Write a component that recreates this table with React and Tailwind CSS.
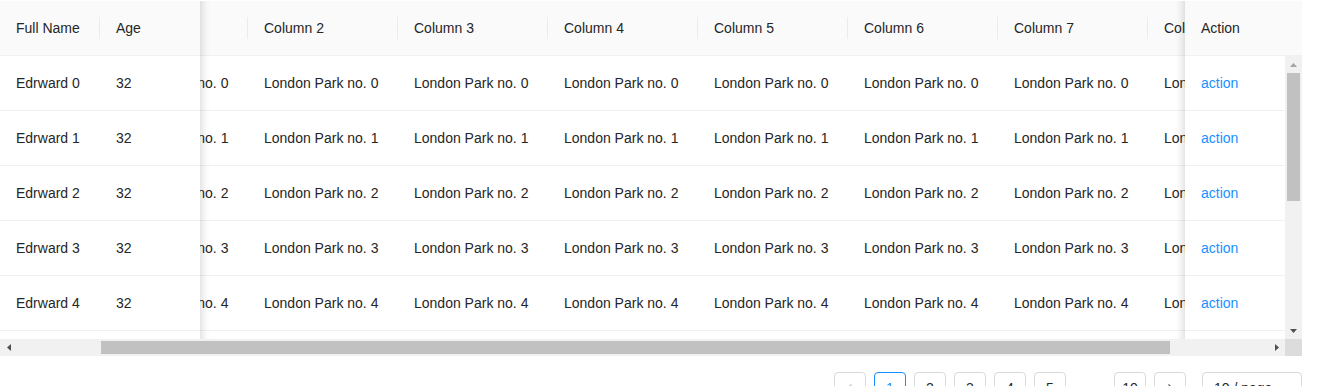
import React from "react";

const rows = [0, 1, 2, 3, 4];
const cols = [1, 2, 3, 4, 5, 6, 7, 8];

function Sep() {
  return <div className="h-[22px] w-px shrink-0 bg-[#ebebeb]" />;
}

function Tri({ dir, color }) {
  const pts = {
    up: "0,4 3.5,0 7,4",
    down: "0,0 7,0 3.5,4",
    left: "4,0 4,7 0,3.5",
    right: "0,0 0,7 4,3.5",
  }[dir];
  const vertical = dir === "up" || dir === "down";
  return (
    <svg width={vertical ? 7 : 4} height={vertical ? 4 : 7} viewBox={vertical ? "0 0 7 4" : "0 0 4 7"}>
      <polygon points={pts} fill={color} />
    </svg>
  );
}

function PageItem({ children, active }) {
  return (
    <div
      className={
        active
          ? "mr-2 flex h-8 w-8 shrink-0 justify-center rounded-sm border border-[#1890ff] bg-white font-medium leading-[30px] text-[#1890ff]"
          : "mr-2 flex h-8 w-8 shrink-0 justify-center rounded-sm border border-[#d9d9d9] bg-white leading-[30px] text-[#262626]"
      }
    >
      {children}
    </div>
  );
}

export default function App() {
  return (
    <div className="h-[386px] w-[1325px] overflow-hidden bg-white font-['Liberation_Sans',Arial,sans-serif] text-sm leading-[22px] text-[#262626]">
      <div className="w-[1302px] pt-px">
        <div className="flex h-[338px]">
          {/* left fixed columns */}
          <div className="relative z-10 w-[200px] shrink-0 bg-white after:pointer-events-none after:absolute after:top-0 after:right-0 after:bottom-0 after:w-[30px] after:translate-x-full after:shadow-[inset_10px_0_8px_-8px_rgba(0,0,0,0.15)]">
            <div className="flex h-[55px] border-b border-[#f0f0f0] bg-[#fafafa] font-medium">
              <div className="flex w-[100px] items-center">
                <div className="flex-1 pl-4">Full Name</div>
                <Sep />
              </div>
              <div className="flex w-[100px] items-center pl-4">Age</div>
            </div>
            <div className="h-[283px] overflow-hidden">
              {rows.map((i) => (
                <div key={i} className="flex h-[55px] items-center border-b border-[#f0f0f0]">
                  <div className="w-[100px] pl-4 whitespace-nowrap">Edrward {i}</div>
                  <div className="w-[100px] pl-4">32</div>
                </div>
              ))}
              <div className="h-[55px] border-b border-[#f0f0f0]" />
            </div>
          </div>

          {/* scrolled middle columns */}
          <div className="min-w-0 flex-1 overflow-hidden">
            <div className="ml-[-102px] w-[1200px]">
              <div className="flex h-[55px] border-b border-[#f0f0f0] bg-[#fafafa] font-medium">
                {cols.map((c) => (
                  <div key={c} className="flex w-[150px] shrink-0 items-center">
                    <div className="flex-1 pl-4 whitespace-nowrap">Column {c}</div>
                    <Sep />
                  </div>
                ))}
              </div>
              <div className="h-[283px] overflow-hidden">
                {rows.map((i) => (
                  <div key={i} className="flex h-[55px] items-center border-b border-[#f0f0f0]">
                    {cols.map((c) => (
                      <div key={c} className="w-[150px] shrink-0 pl-4 whitespace-nowrap">
                        London Park no. {i}
                      </div>
                    ))}
                  </div>
                ))}
                <div className="h-[55px] border-b border-[#f0f0f0]" />
              </div>
            </div>
          </div>

          {/* right fixed column */}
          <div className="relative z-10 w-[100px] shrink-0 bg-white after:pointer-events-none after:absolute after:top-0 after:bottom-0 after:left-0 after:w-[30px] after:-translate-x-full after:shadow-[inset_-10px_0_8px_-8px_rgba(0,0,0,0.15)]">
            <div className="flex h-[55px] items-center border-b border-[#f0f0f0] bg-[#fafafa] pl-4 font-medium">
              Action
            </div>
            <div className="h-[283px] overflow-hidden">
              {rows.map((i) => (
                <div key={i} className="flex h-[55px] items-center border-b border-[#f0f0f0] pl-4 text-[#1890ff]">
                  action
                </div>
              ))}
              <div className="h-[55px] border-b border-[#f0f0f0]" />
            </div>
          </div>

          {/* vertical scrollbar */}
          <div className="flex w-[17px] shrink-0 flex-col">
            <div className="h-[55px] border-b border-[#f0f0f0] bg-[#fafafa]" />
            <div className="flex h-[283px] flex-col bg-[#f1f1f1]">
              <div className="flex h-[17px] items-center justify-center">
                <Tri dir="up" color="#a3a3a3" />
              </div>
              <div className="mx-[2px] h-[128px] bg-[#c1c1c1]" />
              <div className="flex-1" />
              <div className="flex h-[17px] items-center justify-center">
                <Tri dir="down" color="#505050" />
              </div>
            </div>
          </div>
        </div>

        {/* horizontal scrollbar */}
        <div className="flex h-[17px]">
          <div className="flex w-[1285px] items-center bg-[#f1f1f1]">
            <div className="flex w-[17px] justify-center">
              <Tri dir="left" color="#505050" />
            </div>
            <div className="w-[84px]" />
            <div className="h-[13px] w-[1069px] bg-[#c1c1c1]" />
            <div className="flex-1" />
            <div className="flex w-[17px] justify-center">
              <Tri dir="right" color="#505050" />
            </div>
          </div>
          <div className="w-[17px] bg-[#dcdcdc]" />
        </div>

        {/* pagination */}
        <div className="mt-4 flex justify-end">
          <PageItem>
            <svg className="mt-[10px]" width="10" height="10" viewBox="0 0 10 10">
              <path d="M6.5 1.5L3 5l3.5 3.5" fill="none" stroke="#bfbfbf" strokeWidth="1.2" />
            </svg>
          </PageItem>
          <PageItem active>1</PageItem>
          <PageItem>2</PageItem>
          <PageItem>3</PageItem>
          <PageItem>4</PageItem>
          <PageItem>5</PageItem>
          <div className="mr-2 flex h-8 w-8 shrink-0 justify-center pt-[8px] leading-[30px] tracking-[2px] text-[#bfbfbf]">•••</div>
          <PageItem>10</PageItem>
          <div className="flex h-8 w-8 shrink-0 justify-center rounded-sm border border-[#d9d9d9] bg-white">
            <svg className="mt-[10px]" width="10" height="10" viewBox="0 0 10 10">
              <path d="M3.5 1.5L7 5L3.5 8.5" fill="none" stroke="#595959" strokeWidth="1.2" />
            </svg>
          </div>
          <div className="ml-4 flex h-8 w-[100px] shrink-0 items-center justify-between rounded-sm border border-[#d9d9d9] bg-white px-[11px] leading-[30px]">
            <span>10 / page</span>
            <svg width="10" height="10" viewBox="0 0 10 10">
              <path d="M1.5 3.5L5 7l3.5-3.5" fill="none" stroke="#bfbfbf" strokeWidth="1.2" />
            </svg>
          </div>
        </div>
      </div>
    </div>
  );
}
